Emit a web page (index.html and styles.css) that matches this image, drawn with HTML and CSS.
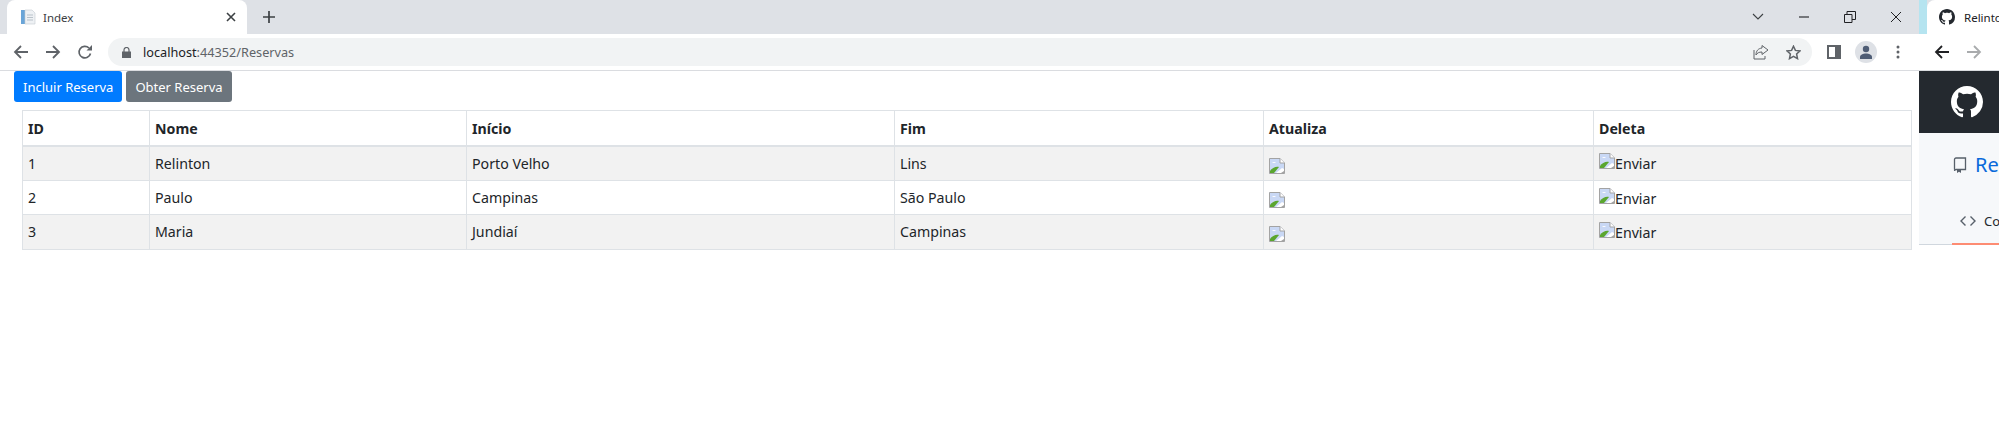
FILE: index.html
```html
<!DOCTYPE html>
<html lang="pt-BR">
<head>
  <meta charset="UTF-8" />
  <title>Index</title>
  <link rel="stylesheet" href="styles.css">
</head>
<body>
  <svg class="defs" width="0" height="0">
    <symbol id="broken" viewBox="0 0 16 16">
      <path d="M.5.5h10.500l4.500 4.500v10.500h-15z" fill="#c9d8f5" stroke="#a3a3a3"/>
      <path d="M11 .5v4.500h4.500" fill="#fff" stroke="#a3a3a3"/>
      <path d="M3 5c1-1.500 3-1.500 4 0z" fill="#fff"/>
      <path d="M1 15v-2c2-3 6-5 9-4l-5 6z" fill="#5aa62f"/>
      <path d="M7 15l6-5 2 1v4z" fill="#fff"/>
      <path d="M12 15l3-2v2z" fill="#a3a3a3"/>
    </symbol>
    <symbol id="octo" viewBox="0 0 16 16">
      <path d="M8 0C3.58 0 0 3.58 0 8c0 3.54 2.29 6.53 5.470 7.590.4.070.550-.170.550-.380 0-.190-.010-.820-.010-1.490-2.010.370-2.530-.490-2.690-.940-.090-.230-.480-.940-.820-1.130-.280-.150-.680-.520-.010-.530.630-.010 1.080.580 1.230.820.720 1.210 1.870.870 2.330.660.070-.520.280-.870.510-1.070-1.780-.2-3.640-.890-3.640-3.950 0-.870.310-1.590.820-2.150-.080-.2-.360-1.020.080-2.120 0 0 .670-.210 2.2.820.640-.180 1.320-.270 2-.270.680 0 1.360.090 2 .270 1.530-1.040 2.2-.820 2.2-.820.440 1.100.160 1.920.080 2.120.510.560.820 1.270.820 2.150 0 3.070-1.870 3.750-3.650 3.950.290.250.540.730.540 1.480 0 1.070-.010 1.930-.010 2.200 0 .210.150.460.550.380A8.013 8.013 0 0016 8c0-4.420-3.580-8-8-8z"/>
    </symbol>
    <symbol id="arrow-left" viewBox="0 0 16 16">
      <path d="M15 8H2M8 2L2 8l6 6" fill="none" stroke="currentColor" stroke-width="1.800"/>
    </symbol>
    <symbol id="arrow-right" viewBox="0 0 16 16">
      <path d="M1 8h13M8 2l6 6-6 6" fill="none" stroke="currentColor" stroke-width="1.800"/>
    </symbol>
    <symbol id="reload" viewBox="0 0 16 16">
      <path d="M13.500 9.500A5.800 5.800 0 1 1 12 4" fill="none" stroke="currentColor" stroke-width="1.700"/>
      <path d="M9.500 6.500H15V1z" fill="currentColor"/>
    </symbol>
  </svg>

  <div class="screen">
    <!-- janela principal -->
    <div class="win win-main">
      <div class="tabstrip">
        <div class="tab">
          <svg class="favicon" width="16" height="16" viewBox="0 0 16 16">
            <path d="M1 1h4v14H1z" fill="#6aa5d8"/>
            <path d="M5 1h7l3 3v11H5z" fill="#eef1f4" stroke="#c5cbd1" stroke-width=".6"/>
            <path d="M7 6h6M7 8.500h6M7 11h6" stroke="#b9c2ca"/>
          </svg>
          <span class="tab-title">Index</span>
          <svg class="tab-close" width="10" height="10" viewBox="0 0 10 10">
            <path d="M1 1l8 8M9 1l-8 8" stroke="#3c4043" stroke-width="1.600"/>
          </svg>
        </div>
        <svg class="newtab" width="14" height="14" viewBox="0 0 14 14">
          <path d="M7 1v12M1 7h12" stroke="#3c4043" stroke-width="1.700"/>
        </svg>
        <div class="winctl">
          <svg width="12" height="10" viewBox="0 0 12 10"><path d="M1 2l5 5 5-5" fill="none" stroke="#3c4043" stroke-width="1.100"/></svg>
          <svg width="12" height="10" viewBox="0 0 12 10"><path d="M1 5h10" stroke="#202124" stroke-width="1.100"/></svg>
          <svg width="12" height="12" viewBox="0 0 12 12"><path d="M.5 3.500h7.500v8h-7.500zM3 3.500v-3h8.500v8h-3.500" fill="none" stroke="#202124"/></svg>
          <svg width="12" height="12" viewBox="0 0 12 12"><path d="M1 1l10 10M11 1L1 11" stroke="#202124"/></svg>
        </div>
      </div>
      <div class="toolbar">
        <svg class="nav" width="16" height="16"><use href="#arrow-left"/></svg>
        <svg class="nav" width="16" height="16"><use href="#arrow-right"/></svg>
        <svg class="nav" width="16" height="16"><use href="#reload"/></svg>
        <div class="omnibox">
          <svg class="lock" width="9" height="11" viewBox="0 0 9 11">
            <path d="M0 4.500h9V11H0z" fill="#5f6368"/>
            <path d="M2 5V3a2.500 2.500 0 0 1 5 0v2" fill="none" stroke="#5f6368" stroke-width="1.200"/>
          </svg>
          <span class="url"><span class="host">localhost</span>:44352/Reservas</span>
          <span class="spacer"></span>
          <svg width="16" height="16" viewBox="0 0 16 16">
            <path d="M9 1.500l6 4.500-6 4.500V8C6 8 4 9 3 11c0-4 2-6.500 6-7z" fill="none" stroke="#5f6368"/>
            <path d="M1 6v9h11v-3" fill="none" stroke="#5f6368"/>
          </svg>
          <svg class="star" width="15" height="15" viewBox="0 0 15 15">
            <path d="M7.500 1.200l1.900 4.200 4.600.500-3.400 3.100.9 4.600-4-2.300-4 2.300.9-4.600L1 5.900l4.600-.500z" fill="none" stroke="#5f6368" stroke-width="1.500"/>
          </svg>
        </div>
        <svg class="sidepanel" width="14" height="14" viewBox="0 0 14 14">
          <path d="M0 0h14v14H0z" fill="#5f6368"/><path d="M2 2h6v10H2z" fill="#fff"/>
        </svg>
        <div class="avatar">
          <svg width="14" height="14" viewBox="0 0 14 14">
            <circle cx="7" cy="4" r="3.200" fill="#4f5d75"/>
            <path d="M1 14v-2c0-2 3-3.500 6-3.500s6 1.500 6 3.500v2z" fill="#4f5d75"/>
          </svg>
        </div>
        <svg class="dots" width="4" height="14" viewBox="0 0 4 14">
          <circle cx="2" cy="2" r="1.500" fill="#5f6368"/><circle cx="2" cy="7" r="1.500" fill="#5f6368"/><circle cx="2" cy="12" r="1.500" fill="#5f6368"/>
        </svg>
      </div>

      <!-- conteudo da pagina -->
      <div class="page">
        <div class="actions">
          <button class="btn btn-primary">Incluir Reserva</button>
          <button class="btn btn-secondary">Obter Reserva</button>
        </div>
        <table class="reservas">
          <thead>
            <tr>
              <th class="col-id">ID</th><th class="col-nome">Nome</th><th class="col-inicio">Início</th>
              <th class="col-fim">Fim</th><th class="col-atualiza">Atualiza</th><th>Deleta</th>
            </tr>
          </thead>
          <tbody>
            <tr>
              <td>1</td><td>Relinton</td><td>Porto Velho</td><td>Lins</td>
              <td><svg class="broken low" width="16" height="16"><use href="#broken"/></svg></td>
              <td><svg class="broken" width="16" height="16"><use href="#broken"/></svg>Enviar</td>
            </tr>
            <tr>
              <td>2</td><td>Paulo</td><td>Campinas</td><td>São Paulo</td>
              <td><svg class="broken low" width="16" height="16"><use href="#broken"/></svg></td>
              <td><svg class="broken" width="16" height="16"><use href="#broken"/></svg>Enviar</td>
            </tr>
            <tr>
              <td>3</td><td>Maria</td><td>Jundiaí</td><td>Campinas</td>
              <td><svg class="broken low" width="16" height="16"><use href="#broken"/></svg></td>
              <td><svg class="broken" width="16" height="16"><use href="#broken"/></svg>Enviar</td>
            </tr>
          </tbody>
        </table>
      </div>
    </div>

    <!-- janela do github, cortada na direita -->
    <div class="win win-side">
      <div class="tabstrip side-strip">
        <div class="tab side-tab">
          <svg class="no-shrink" width="16" height="16" fill="#24292f"><use href="#octo"/></svg>
          <span class="tab-title side-title">Relinto</span>
        </div>
      </div>
      <div class="toolbar side-toolbar">
        <svg class="nav-dark no-shrink" width="16" height="16"><use href="#arrow-left"/></svg>
        <svg class="nav-off no-shrink" width="16" height="16"><use href="#arrow-right"/></svg>
        <svg class="nav-dark no-shrink" width="16" height="16"><use href="#reload"/></svg>
      </div>
      <div class="gh-header">
        <svg width="32" height="32" fill="#fff"><use href="#octo"/></svg>
      </div>
      <div class="gh-repo">
        <div class="gh-title">
          <svg class="no-shrink" width="16" height="16" viewBox="0 0 16 16">
            <path d="M2.500 12.500V2.500a1.500 1.500 0 0 1 1.500-1.500h9.500v11.500H4a1.500 1.500 0 0 0-1.500 1.500" fill="none" stroke="#57606a" stroke-width="1.300"/>
            <path d="M5 12.500h4v3.500l-2-1.200-2 1.200z" fill="#57606a"/>
          </svg>
          <span class="gh-name">Rel</span>
        </div>
        <div class="gh-tabs">
          <div class="gh-tab">
            <svg class="no-shrink" width="16" height="16" viewBox="0 0 16 16">
              <path d="M5.500 3.500L1 8l4.500 4.500M10.500 3.500L15 8l-4.500 4.500" fill="none" stroke="#57606a" stroke-width="1.400"/>
            </svg>
            <span>Co</span>
          </div>
        </div>
      </div>
    </div>
  </div>
</body>
</html>
```

FILE: styles.css
```css
* {
  box-sizing: border-box;
}
html, body {
  margin: 0;
  padding: 0;
  height: 100%;
  background: #fff;
  overflow: hidden;
}
body {
  font-family: 'Noto Sans', 'Open Sans', sans-serif;
  font-size: 14.2px;
  color: #212529;
}
.defs {
  position: absolute;
}
.no-shrink {
  flex: none;
}
.screen {
  display: flex;
  width: 1999px;
  height: 442px;
  overflow: hidden;
}
.win-main {
  width: 1919px;
  flex: none;
}
.win-side {
  flex: 1;
  min-width: 0;
  overflow: hidden;
}
/* barra de abas */
.tabstrip {
  display: flex;
  align-items: center;
  height: 34px;
  background: #dee1e6;
  padding-left: 7px;
}
.tab {
  display: flex;
  align-items: center;
  width: 240px;
  height: 34px;
  background: #fff;
  border-radius: 8px 8px 0 0;
  padding: 0 11px 0 13px;
}
.favicon {
  margin-right: 7px;
}
.tab-title {
  flex: 1;
  font-size: 11.5px;
  color: #3c4043;
}
.newtab {
  margin-left: 15px;
}
.winctl {
  display: flex;
  align-items: center;
  gap: 34px;
  margin-left: auto;
  margin-right: 17px;
}
.toolbar {
  display: flex;
  align-items: center;
  height: 37px;
  background: #fff;
  border-bottom: 1px solid #dadce0;
  padding-left: 13px;
  color: #5f6368;
}
.nav {
  margin-right: 16px;
}
.omnibox {
  display: flex;
  align-items: center;
  gap: 17px;
  width: 1704px;
  height: 28px;
  margin-left: -1px;
  background: #f1f3f4;
  border-radius: 14px;
  padding: 0 11px 0 14px;
  font-size: 12.700px;
}
.url {
  margin-left: -5px;
  color: #5f6368;
}
.host {
  color: #202124;
}
.spacer {
  flex: 1;
}
.sidepanel {
  margin-left: 15px;
}
.avatar {
  display: flex;
  align-items: center;
  justify-content: center;
  width: 22px;
  height: 22px;
  margin-left: 14px;
  background: #dee1e6;
  border-radius: 50%;
}
.dots {
  margin-left: 19px;
}
/* conteudo */
.page {
  padding: 0 7px 0 14px;
}
.actions {
  display: flex;
  gap: 4px;
  height: 32px;
  padding-bottom: 1px;
}
.btn {
  height: 31px;
  border: none;
  border-radius: 3px;
  padding: 0 9px;
  font-family: inherit;
  font-size: 13px;
  color: #fff;
}
.btn-primary {
  background: #007bff;
}
.btn-secondary {
  background: #6c757d;
}
.reservas {
  width: 1890px;
  margin: 7px 0 0 8px;
  border-collapse: collapse;
  table-layout: fixed;
}
.reservas th, .reservas td {
  height: 34.400px;
  border: 1px solid #dee2e6;
  padding: 0 5px;
  text-align: left;
}
.reservas th {
  height: 35.500px;
  border-bottom-width: 2px;
  font-weight: 700;
}
.reservas tbody tr:nth-child(odd) {
  background: #f2f2f2;
}
.col-id { width: 127px; }
.col-nome { width: 317px; }
.col-inicio { width: 428px; }
.col-fim { width: 369px; }
.col-atualiza { width: 330px; }
.broken {
  vertical-align: 0;
}
.broken.low {
  vertical-align: -6px;
}
/* janela lateral */
.side-strip {
  background: linear-gradient(90deg, #b5e4f0 8px, #dee1e6 8px);
  padding-left: 8px;
}
.side-tab {
  padding-left: 12px;
  flex: none;
}
.side-title {
  margin-left: 9px;
  color: #202124;
}
.side-toolbar {
  padding-left: 15px;
  gap: 16px;
}
.nav-dark {
  color: #202124;
}
.nav-off {
  color: #a9abad;
}
.gh-header {
  display: flex;
  align-items: center;
  height: 62px;
  padding-left: 32px;
  background: #24292f;
}
.gh-repo {
  height: 112px;
  background: #f6f8fa;
  border-bottom: 1px solid #d0d7de;
  padding-top: 18px;
}
.gh-title {
  display: flex;
  align-items: center;
  gap: 7px;
  padding-left: 33px;
  white-space: nowrap;
}
.gh-name {
  font-size: 20px;
  color: #0969da;
}
.gh-tabs {
  display: flex;
  margin: 24px 0 0 33px;
}
.gh-tab {
  display: flex;
  align-items: center;
  gap: 8px;
  height: 43px;
  padding: 0 8px 3px;
  border-bottom: 2px solid #fd8c73;
  font-size: 13px;
  color: #24292f;
  white-space: nowrap;
}
```
